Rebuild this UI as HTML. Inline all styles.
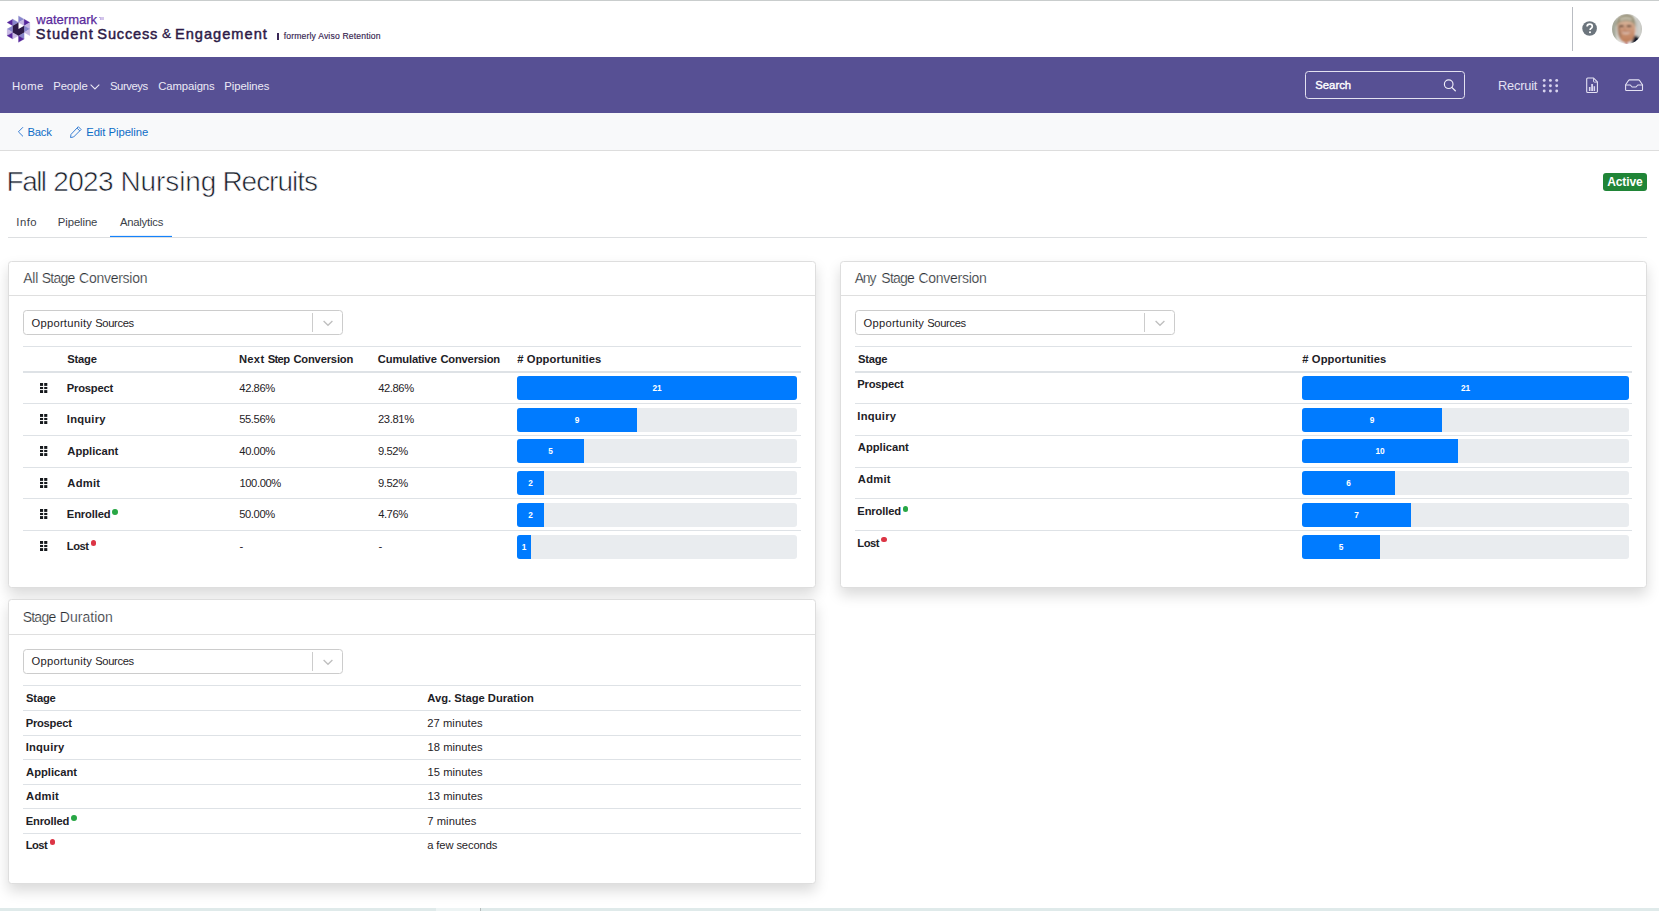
<!DOCTYPE html>
<html><head><meta charset="utf-8"><title>Fall 2023 Nursing Recruits</title>
<style>
html,body{margin:0;padding:0;background:#fff;}
body{width:1659px;height:911px;position:relative;overflow:hidden;font-family:"Liberation Sans",sans-serif;}
div{box-sizing:content-box}
.t{position:absolute;white-space:pre;line-height:20px;font-family:"Liberation Sans",sans-serif;}
</style></head><body>
<div style="position:absolute;left:0px;top:0px;width:1659px;height:1px;background:#c9cdcd"></div>
<svg style="position:absolute;left:0;top:0" width="60" height="57" viewBox="0 0 60 57"><polygon points="7.08,22.5 12.75,19.2 12.75,25.8" fill="#55269b" stroke="#55269b" stroke-width="0.25"/><polygon points="7.08,29.1 12.75,25.8 12.75,32.4" fill="#8886cc" stroke="#8886cc" stroke-width="0.25"/><polygon points="12.75,32.4 7.08,29.1 7.08,35.7" fill="#c6b7e3" stroke="#c6b7e3" stroke-width="0.25"/><polygon points="7.08,35.7 12.75,32.4 12.75,39.0" fill="#55269b" stroke="#55269b" stroke-width="0.25"/><polygon points="18.5,22.5 12.75,19.2 12.75,25.8" fill="#8886cc" stroke="#8886cc" stroke-width="0.25"/><polygon points="18.5,35.7 12.75,32.4 12.75,39.0" fill="#c6b7e3" stroke="#c6b7e3" stroke-width="0.25"/><polygon points="24.15,19.2 18.5,15.9 18.5,22.5" fill="#8886cc" stroke="#8886cc" stroke-width="0.25"/><polygon points="18.5,22.5 24.15,19.2 24.15,25.8" fill="#c6b7e3" stroke="#c6b7e3" stroke-width="0.25"/><polygon points="18.5,35.7 24.15,32.4 24.15,39.0" fill="#8886cc" stroke="#8886cc" stroke-width="0.25"/><polygon points="24.15,39.0 18.5,35.7 18.5,42.3" fill="#55269b" stroke="#55269b" stroke-width="0.25"/><polygon points="29.9,22.5 24.15,19.2 24.15,25.8" fill="#55269b" stroke="#55269b" stroke-width="0.25"/><polygon points="24.15,25.8 29.9,22.5 29.9,29.1" fill="#c6b7e3" stroke="#c6b7e3" stroke-width="0.25"/><polygon points="29.9,29.1 24.15,25.8 24.15,32.4" fill="#8886cc" stroke="#8886cc" stroke-width="0.25"/><polygon points="24.15,32.4 29.9,29.1 29.9,35.7" fill="#c6b7e3" stroke="#c6b7e3" stroke-width="0.25"/><polygon points="12.75,25.8 18.5,22.5 18.5,29.1 24.15,25.8 24.15,32.4 18.5,35.7 12.75,32.4" fill="#2c1a47"/></svg>
<span class="t" style="left:36.32px;top:9.50px;font-size:13px;font-weight:400;color:#5a2a9c;letter-spacing:0.009px;-webkit-text-stroke:0.25px #5a2a9c;">watermark</span>
<div style="position:absolute;left:99.1px;top:17.3px;width:1.9px;height:0.7px;background:#b9a3de"></div>
<div style="position:absolute;left:99.8px;top:17.3px;width:0.6px;height:2.3px;background:#c6b4e4"></div>
<div style="position:absolute;left:101.4px;top:17.4px;width:2.4px;height:2.2px;background:#d3c5eb"></div>
<span class="t" style="left:35.86px;top:24.04px;font-size:14.6px;font-weight:400;color:#2d1a47;letter-spacing:1.120px;-webkit-text-stroke:0.45px #2d1a47;">Student</span><span class="t" style="left:97.36px;top:24.04px;font-size:14.6px;font-weight:400;color:#2d1a47;letter-spacing:0.799px;-webkit-text-stroke:0.45px #2d1a47;">Success</span><span class="t" style="left:174.92px;top:24.04px;font-size:14.6px;font-weight:400;color:#2d1a47;letter-spacing:1.022px;-webkit-text-stroke:0.45px #2d1a47;">Engagement</span>
<span class="t" style="left:162.02px;top:24.39px;font-size:13.6px;font-weight:400;color:#2d1a47;-webkit-text-stroke:0.3px #2d1a47;">&amp;</span>
<div style="position:absolute;left:277.3px;top:32.6px;width:1.3px;height:7.2px;background:#3a2857"></div>
<span class="t" style="left:283.68px;top:25.92px;font-size:8.6px;font-weight:400;color:#35234f;letter-spacing:0.169px;-webkit-text-stroke:0.15px #35234f;">formerly Aviso Retention</span>
<div style="position:absolute;left:1572px;top:7px;width:1px;height:44px;background:#b9bcc2"></div>
<svg style="position:absolute;left:1581px;top:20px" width="17" height="17" viewBox="0 0 17 17"><circle cx="8.6" cy="8.5" r="7.3" fill="#6c757d"/><path d="M6.1 6.6c0-1.5 1.1-2.4 2.6-2.4s2.6.9 2.6 2.2c0 1.1-.7 1.6-1.4 2.1-.6.4-.8.7-.8 1.4" fill="none" stroke="#fff" stroke-width="1.7" stroke-linecap="butt"/><circle cx="9" cy="12.2" r="1.05" fill="#fff"/></svg>
<svg style="position:absolute;left:1612px;top:14px" width="30" height="30" viewBox="0 0 30 30"><defs><clipPath id="av"><circle cx="15" cy="15" r="15"/></clipPath><filter id="bl" x="-20%" y="-20%" width="140%" height="140%"><feGaussianBlur stdDeviation="0.85"/></filter><linearGradient id="fc" x1="0" y1="0" x2="0" y2="1"><stop offset="0" stop-color="#d9b59b"/><stop offset="0.4" stop-color="#cd987a"/><stop offset="1" stop-color="#bd7c56"/></linearGradient></defs><g clip-path="url(#av)"><g filter="url(#bl)"><rect x="-5" y="-5" width="40" height="40" fill="#e4e4e1"/><rect x="-5" y="-5" width="9" height="40" fill="#a5a89a"/><rect x="4" y="-5" width="2.500" height="40" fill="#d4d6cf"/><rect x="24.900" y="-5" width="1.500" height="40" fill="#b0b1ab"/><rect x="28.200" y="-5" width="6" height="40" fill="#bdbdb7"/><path d="M4.300 12.500 Q3.200 1 14.200 -0.200 Q25 0 23.800 14 L21 10 L7 9.500 Z" fill="#989278"/><path d="M7.500 4.500 Q14 1 20.500 4.500 L19.500 6.500 Q14 4.500 8.500 6.800z" fill="#c4bfad"/><path d="M5.200 13.500 Q5.200 7.200 14 7 Q23.400 7.200 23.600 14.500 Q23.900 20.500 21 24.900 Q17.900 28.800 14.300 28.800 Q10.700 28.800 7.900 24.900 Q5.100 20 5.200 13.500z" fill="url(#fc)"/><path d="M5.600 13.500 Q5.600 20 8.100 24.700 L9.500 22.500 Q7.400 17.500 7.700 11z" fill="#a0775b"/><path d="M7.300 12.100 h4.300 M14.800 12.100 h4.500" stroke="#3e281d" stroke-width="1.900"/><path d="M10 18.200 Q14 21.300 17.900 18.200 Q14 19.300 10 18.200z" fill="#ecd9ce" stroke="#e6cfc2" stroke-width="0.7"/><path d="M9.500 17.300 Q14 18.600 18.300 17.300" stroke="#a0624a" stroke-width="0.7" fill="none"/><path d="M12.200 14 Q12 16 13.800 16.300" stroke="#ae7656" stroke-width="0.8" fill="none"/><path d="M8 33 L9.500 27.800 Q14.300 30.500 19.500 27.300 L21 33z" fill="#f1f2f6"/><path d="M18.500 34 L20 27.300 L23 21.200 L27 23.600 L31 27 L31 34z" fill="#101828"/><path d="M13.300 28.900 h2 l.3 2 h-2.600z" fill="#b52c48"/></g></g></svg>
<div style="position:absolute;left:0px;top:57px;width:1659px;height:56px;background:#575094"></div>
<span class="t" style="left:12.07px;top:76.18px;font-size:11.3px;font-weight:400;color:#eceaf6;letter-spacing:0.396px;">Home</span>
<span class="t" style="left:53.27px;top:76.18px;font-size:11.3px;font-weight:400;color:#eceaf6;letter-spacing:-0.132px;">People</span>
<svg style="position:absolute;left:89px;top:82px" width="12" height="10" viewBox="0 0 12 10"><path d="M1.6 2.6 L5.950 6.9 L10.300 2.600" fill="none" stroke="#eceaf6" stroke-width="1.05"/></svg>
<span class="t" style="left:109.99px;top:76.18px;font-size:11.3px;font-weight:400;color:#eceaf6;letter-spacing:-0.449px;">Surveys</span>
<span class="t" style="left:158.23px;top:76.18px;font-size:11.3px;font-weight:400;color:#eceaf6;letter-spacing:-0.084px;">Campaigns</span>
<span class="t" style="left:224.37px;top:76.18px;font-size:11.3px;font-weight:400;color:#eceaf6;letter-spacing:-0.103px;">Pipelines</span>
<div style="position:absolute;left:1305px;top:71px;width:158px;height:26px;border:1px solid #e3e1f0;border-radius:3.500px;"></div>
<span class="t" style="left:1315.29px;top:74.68px;font-size:11.3px;font-weight:400;color:#ffffff;letter-spacing:0.010px;-webkit-text-stroke:0.4px #ffffff;">Search</span>
<svg style="position:absolute;left:1441px;top:77px" width="17" height="16" viewBox="0 0 17 16"><circle cx="7.700" cy="7.200" r="4.300" fill="none" stroke="#f0eef8" stroke-width="1.15"/><path d="M10.800 10.400 L14.300 13.700" stroke="#f0eef8" stroke-width="1.3" stroke-linecap="round"/></svg>
<span class="t" style="left:1498.05px;top:75.96px;font-size:12.8px;font-weight:400;color:#e3e0f2;letter-spacing:-0.201px;">Recruit</span>
<svg style="position:absolute;left:1542px;top:78px" width="18" height="16" viewBox="0 0 18 16"><circle cx="2.2" cy="2.4" r="1.45" fill="#d8d4ee"/><circle cx="2.2" cy="7.7" r="1.45" fill="#d8d4ee"/><circle cx="2.2" cy="13.0" r="1.45" fill="#d8d4ee"/><circle cx="8.4" cy="2.4" r="1.45" fill="#d8d4ee"/><circle cx="8.4" cy="7.7" r="1.45" fill="#d8d4ee"/><circle cx="8.4" cy="13.0" r="1.45" fill="#d8d4ee"/><circle cx="14.7" cy="2.4" r="1.45" fill="#d8d4ee"/><circle cx="14.7" cy="7.7" r="1.45" fill="#d8d4ee"/><circle cx="14.7" cy="13.0" r="1.45" fill="#d8d4ee"/></svg>
<svg style="position:absolute;left:1584px;top:76px" width="17" height="19" viewBox="0 0 17 19"><path d="M3.700 2.050 h5.900 l3.800 3.900 v9.500 a1 1 0 0 1 -1 1 h-8.700 a1 1 0 0 1 -1 -1 v-12.400 a1 1 0 0 1 1 -1z" fill="none" stroke="#e4e1f3" stroke-width="1.1" stroke-linejoin="round"/><path d="M9.500 2.300 v3 a.8 .8 0 0 0 .8 .8 h3" fill="none" stroke="#e4e1f3" stroke-width="0.9"/><rect x="4.900" y="11" width="1.600" height="4" fill="#d9d5ee"/><rect x="7.200" y="8" width="1.800" height="7" fill="#d9d5ee"/><rect x="9.600" y="10.200" width="1.500" height="4.800" fill="#d9d5ee"/></svg>
<svg style="position:absolute;left:1624px;top:77px" width="21" height="17" viewBox="0 0 21 17"><path d="M1.600 7.800 L4.700 3.300 Q5 2.900 5.500 2.900 H14.600 Q15.100 2.900 15.400 3.300 L18.500 7.800 V12.700 Q18.500 13.500 17.700 13.500 H2.400 Q1.600 13.500 1.600 12.700 Z" fill="none" stroke="#e4e1f3" stroke-width="1.1" stroke-linejoin="round"/><path d="M1.600 8 H6.300 L8.100 10 H12 L13.800 8 H18.500" fill="none" stroke="#e4e1f3" stroke-width="1.1" stroke-linejoin="round"/></svg>
<div style="position:absolute;left:0px;top:113px;width:1659px;height:37px;background:#f8f9fa;border-bottom:1px solid #dddddd"></div>
<svg style="position:absolute;left:16px;top:125px" width="9" height="13" viewBox="0 0 9 13"><path d="M7 2.200 L2.400 6.800 L7 11.400" fill="none" stroke="#3a7fd6" stroke-width="1"/></svg>
<span class="t" style="left:27.47px;top:122.18px;font-size:11.3px;font-weight:400;color:#0f6dc6;letter-spacing:-0.238px;">Back</span>
<svg style="position:absolute;left:69px;top:125px" width="14" height="14" viewBox="0 0 14 14"><path d="M9.300 1.700 L12.100 4.500 L4.600 12 L1.500 12.500 L2 9.400 Z M8 3.100 L10.800 5.900" fill="none" stroke="#2f79d2" stroke-width="0.95" stroke-linejoin="round"/></svg>
<span class="t" style="left:86.17px;top:122.18px;font-size:11.3px;font-weight:400;color:#0f6dc6;letter-spacing:-0.057px;">Edit Pipeline</span>
<span class="t" style="left:6.60px;top:171.60px;font-size:28px;font-weight:400;color:#1c222e;letter-spacing:-1.552px;-webkit-text-stroke:0.62px #fff;">Fall</span><span class="t" style="left:53.29px;top:171.60px;font-size:28px;font-weight:400;color:#1c222e;letter-spacing:-0.686px;-webkit-text-stroke:0.62px #fff;">2023</span><span class="t" style="left:120.50px;top:171.60px;font-size:28px;font-weight:400;color:#1c222e;letter-spacing:-0.114px;-webkit-text-stroke:0.62px #fff;">Nursing</span><span class="t" style="left:222.40px;top:171.60px;font-size:28px;font-weight:400;color:#1c222e;letter-spacing:-1.028px;-webkit-text-stroke:0.62px #fff;">Recruits</span>
<div style="position:absolute;left:1603px;top:173px;width:44px;height:18px;background:#208537;border-radius:3px"></div>
<span class="t" style="left:1607.30px;top:171.64px;font-size:12px;font-weight:700;color:#fff;letter-spacing:-0.144px;">Active</span>
<div style="position:absolute;left:8px;top:237px;width:1639px;height:1px;background:#dddfe1"></div>
<div style="position:absolute;left:110px;top:236px;width:62px;height:1px;background:#1583fb"></div>
<div style="position:absolute;left:110px;top:235px;width:62px;height:1px;background:rgba(21,131,251,.12)"></div>
<span class="t" style="left:16.36px;top:212.18px;font-size:11.3px;font-weight:400;color:#3b4148;letter-spacing:0.458px;">Info</span>
<span class="t" style="left:57.87px;top:212.18px;font-size:11.3px;font-weight:400;color:#3b4148;letter-spacing:-0.096px;">Pipeline</span>
<span class="t" style="left:119.88px;top:212.18px;font-size:11.3px;font-weight:400;color:#3b4148;letter-spacing:-0.224px;">Analytics</span>
<div style="position:absolute;left:8px;top:261px;width:806px;height:325px;background:#fff;border:1px solid #dedede;border-radius:3.5px;box-shadow:0 7px 14px rgba(0,0,0,.15);"></div>
<div style="position:absolute;left:9px;top:295px;width:806px;height:1px;background:#dfdfdf"></div>
<span class="t" style="left:23.17px;top:268.15px;font-size:14px;font-weight:400;color:#2b2f34;letter-spacing:-0.199px;-webkit-text-stroke:0.22px #fff;">All</span><span class="t" style="left:41.76px;top:268.15px;font-size:14px;font-weight:400;color:#2b2f34;letter-spacing:-0.759px;-webkit-text-stroke:0.22px #fff;">Stage</span><span class="t" style="left:79.09px;top:268.15px;font-size:14px;font-weight:400;color:#2b2f34;letter-spacing:-0.268px;-webkit-text-stroke:0.22px #fff;">Conversion</span>
<div style="position:absolute;left:23px;top:310px;width:318px;height:23px;border:1px solid #cccccc;border-radius:3.500px;background:#fff"></div>
<div style="position:absolute;left:312px;top:313px;width:1px;height:19px;background:#cccccc"></div>
<svg style="position:absolute;left:321px;top:318px" width="14" height="10" viewBox="0 0 14 10"><path d="M2.600 3.100 L7 7.300 L11.400 3.100" fill="none" stroke="#bfbfbf" stroke-width="1.35"/></svg>
<span class="t" style="left:31.47px;top:312.92px;font-size:11.2px;font-weight:400;color:#1f2226;letter-spacing:0.261px;">Opportunity</span><span class="t" style="left:95.19px;top:312.92px;font-size:11.2px;font-weight:400;color:#1f2226;letter-spacing:-0.339px;">Sources</span>
<div style="position:absolute;left:23px;top:346px;width:778px;height:1px;background:#dee2e6"></div>
<span class="t" style="left:67.18px;top:349.32px;font-size:11.2px;font-weight:700;color:#1d2126;letter-spacing:-0.191px;">Stage</span>
<span class="t" style="left:238.95px;top:349.32px;font-size:11.2px;font-weight:700;color:#1d2126;letter-spacing:0.312px;">Next</span><span class="t" style="left:267.68px;top:349.32px;font-size:11.2px;font-weight:700;color:#1d2126;letter-spacing:-0.623px;">Step</span><span class="t" style="left:293.44px;top:349.32px;font-size:11.2px;font-weight:700;color:#1d2126;letter-spacing:-0.188px;">Conversion</span>
<span class="t" style="left:377.84px;top:349.32px;font-size:11.2px;font-weight:700;color:#1d2126;letter-spacing:-0.141px;">Cumulative</span><span class="t" style="left:440.44px;top:349.32px;font-size:11.2px;font-weight:700;color:#1d2126;letter-spacing:-0.199px;">Conversion</span>
<span class="t" style="left:517.31px;top:349.32px;font-size:11.2px;font-weight:700;color:#1d2126;">#</span><span class="t" style="left:526.84px;top:349.32px;font-size:11.2px;font-weight:700;color:#1d2126;letter-spacing:0.098px;">Opportunities</span>
<div style="position:absolute;left:23px;top:371px;width:778px;height:2px;background:#dee2e6"></div>
<svg style="position:absolute;left:39.800px;top:382.9px" width="8" height="11" viewBox="0 0 8 11"><rect x="0" y="0" width="3.1" height="2.9" fill="#15181c"/><rect x="0" y="3.95" width="3.1" height="2.1" fill="#15181c"/><rect x="0" y="7.1" width="3.1" height="2.9" fill="#15181c"/><rect x="4.2" y="0" width="3.1" height="2.9" fill="#15181c"/><rect x="4.2" y="3.95" width="3.1" height="2.1" fill="#15181c"/><rect x="4.2" y="7.1" width="3.1" height="2.9" fill="#15181c"/></svg>
<span class="t" style="left:66.85px;top:377.92px;font-size:11.2px;font-weight:700;color:#1d2126;letter-spacing:-0.227px;">Prospect</span>
<span class="t" style="left:239.34px;top:377.92px;font-size:11.2px;font-weight:400;color:#1f2327;letter-spacing:-0.419px;">42.86%</span>
<span class="t" style="left:378.24px;top:377.92px;font-size:11.2px;font-weight:400;color:#1f2327;letter-spacing:-0.419px;">42.86%</span>
<div style="position:absolute;left:517px;top:376px;width:280px;height:24px;background:#e9ecef;border-radius:3px;overflow:hidden"></div>
<div style="position:absolute;left:517px;top:376px;width:280px;height:24px;background:#007bff;border-radius:3px"></div>
<span class="t" style="left:652.38px;top:378.12px;font-size:8.3px;font-weight:700;color:#fff;">21</span>
<div style="position:absolute;left:23px;top:403px;width:778px;height:1px;background:#dee2e6"></div>
<svg style="position:absolute;left:39.800px;top:413.9px" width="8" height="11" viewBox="0 0 8 11"><rect x="0" y="0" width="3.1" height="2.9" fill="#15181c"/><rect x="0" y="3.95" width="3.1" height="2.1" fill="#15181c"/><rect x="0" y="7.1" width="3.1" height="2.9" fill="#15181c"/><rect x="4.2" y="0" width="3.1" height="2.9" fill="#15181c"/><rect x="4.2" y="3.95" width="3.1" height="2.1" fill="#15181c"/><rect x="4.2" y="7.1" width="3.1" height="2.9" fill="#15181c"/></svg>
<span class="t" style="left:66.85px;top:408.92px;font-size:11.2px;font-weight:700;color:#1d2126;letter-spacing:0.219px;">Inquiry</span>
<span class="t" style="left:239.15px;top:408.92px;font-size:11.2px;font-weight:400;color:#1f2327;letter-spacing:-0.381px;">55.56%</span>
<span class="t" style="left:377.94px;top:408.92px;font-size:11.2px;font-weight:400;color:#1f2327;letter-spacing:-0.358px;">23.81%</span>
<div style="position:absolute;left:517px;top:408px;width:280px;height:24px;background:#e9ecef;border-radius:3px;overflow:hidden"></div>
<div style="position:absolute;left:517px;top:408px;width:120px;height:24px;background:#007bff;border-radius:3px 0 0 3px"></div>
<span class="t" style="left:574.69px;top:410.12px;font-size:8.3px;font-weight:700;color:#fff;">9</span>
<div style="position:absolute;left:23px;top:435px;width:778px;height:1px;background:#dee2e6"></div>
<svg style="position:absolute;left:39.800px;top:445.9px" width="8" height="11" viewBox="0 0 8 11"><rect x="0" y="0" width="3.1" height="2.9" fill="#15181c"/><rect x="0" y="3.95" width="3.1" height="2.1" fill="#15181c"/><rect x="0" y="7.1" width="3.1" height="2.9" fill="#15181c"/><rect x="4.2" y="0" width="3.1" height="2.9" fill="#15181c"/><rect x="4.2" y="3.95" width="3.1" height="2.1" fill="#15181c"/><rect x="4.2" y="7.1" width="3.1" height="2.9" fill="#15181c"/></svg>
<span class="t" style="left:67.32px;top:440.92px;font-size:11.2px;font-weight:700;color:#1d2126;letter-spacing:-0.007px;">Applicant</span>
<span class="t" style="left:239.34px;top:440.92px;font-size:11.2px;font-weight:400;color:#1f2327;letter-spacing:-0.419px;">40.00%</span>
<span class="t" style="left:377.98px;top:440.92px;font-size:11.2px;font-weight:400;color:#1f2327;letter-spacing:-0.403px;">9.52%</span>
<div style="position:absolute;left:517px;top:439px;width:280px;height:24px;background:#e9ecef;border-radius:3px;overflow:hidden"></div>
<div style="position:absolute;left:517px;top:439px;width:67px;height:24px;background:#007bff;border-radius:3px 0 0 3px"></div>
<span class="t" style="left:548.19px;top:441.12px;font-size:8.3px;font-weight:700;color:#fff;">5</span>
<div style="position:absolute;left:23px;top:467px;width:778px;height:1px;background:#dee2e6"></div>
<svg style="position:absolute;left:39.800px;top:477.9px" width="8" height="11" viewBox="0 0 8 11"><rect x="0" y="0" width="3.1" height="2.9" fill="#15181c"/><rect x="0" y="3.95" width="3.1" height="2.1" fill="#15181c"/><rect x="0" y="7.1" width="3.1" height="2.9" fill="#15181c"/><rect x="4.2" y="0" width="3.1" height="2.9" fill="#15181c"/><rect x="4.2" y="3.95" width="3.1" height="2.1" fill="#15181c"/><rect x="4.2" y="7.1" width="3.1" height="2.9" fill="#15181c"/></svg>
<span class="t" style="left:67.32px;top:472.92px;font-size:11.2px;font-weight:700;color:#1d2126;letter-spacing:0.253px;">Admit</span>
<span class="t" style="left:239.45px;top:472.92px;font-size:11.2px;font-weight:400;color:#1f2327;letter-spacing:-0.387px;">100.00%</span>
<span class="t" style="left:377.98px;top:472.92px;font-size:11.2px;font-weight:400;color:#1f2327;letter-spacing:-0.403px;">9.52%</span>
<div style="position:absolute;left:517px;top:471px;width:280px;height:24px;background:#e9ecef;border-radius:3px;overflow:hidden"></div>
<div style="position:absolute;left:517px;top:471px;width:27px;height:24px;background:#007bff;border-radius:3px 0 0 3px"></div>
<span class="t" style="left:528.19px;top:473.12px;font-size:8.3px;font-weight:700;color:#fff;">2</span>
<div style="position:absolute;left:23px;top:498px;width:778px;height:1px;background:#dee2e6"></div>
<svg style="position:absolute;left:39.800px;top:508.9px" width="8" height="11" viewBox="0 0 8 11"><rect x="0" y="0" width="3.1" height="2.9" fill="#15181c"/><rect x="0" y="3.95" width="3.1" height="2.1" fill="#15181c"/><rect x="0" y="7.1" width="3.1" height="2.9" fill="#15181c"/><rect x="4.2" y="0" width="3.1" height="2.9" fill="#15181c"/><rect x="4.2" y="3.95" width="3.1" height="2.1" fill="#15181c"/><rect x="4.2" y="7.1" width="3.1" height="2.9" fill="#15181c"/></svg>
<span class="t" style="left:66.85px;top:503.92px;font-size:11.2px;font-weight:700;color:#1d2126;letter-spacing:-0.140px;">Enrolled</span>
<div style="position:absolute;left:112.2px;top:508.9px;width:5.8px;height:5.8px;border-radius:50%;background:#28a745"></div>
<span class="t" style="left:239.15px;top:503.92px;font-size:11.2px;font-weight:400;color:#1f2327;letter-spacing:-0.381px;">50.00%</span>
<span class="t" style="left:378.24px;top:503.92px;font-size:11.2px;font-weight:400;color:#1f2327;letter-spacing:-0.470px;">4.76%</span>
<div style="position:absolute;left:517px;top:503px;width:280px;height:24px;background:#e9ecef;border-radius:3px;overflow:hidden"></div>
<div style="position:absolute;left:517px;top:503px;width:27px;height:24px;background:#007bff;border-radius:3px 0 0 3px"></div>
<span class="t" style="left:528.19px;top:505.12px;font-size:8.3px;font-weight:700;color:#fff;">2</span>
<div style="position:absolute;left:23px;top:530px;width:778px;height:1px;background:#dee2e6"></div>
<svg style="position:absolute;left:39.800px;top:540.9px" width="8" height="11" viewBox="0 0 8 11"><rect x="0" y="0" width="3.1" height="2.9" fill="#15181c"/><rect x="0" y="3.95" width="3.1" height="2.1" fill="#15181c"/><rect x="0" y="7.1" width="3.1" height="2.9" fill="#15181c"/><rect x="4.2" y="0" width="3.1" height="2.9" fill="#15181c"/><rect x="4.2" y="3.95" width="3.1" height="2.1" fill="#15181c"/><rect x="4.2" y="7.1" width="3.1" height="2.9" fill="#15181c"/></svg>
<span class="t" style="left:66.85px;top:535.92px;font-size:11.2px;font-weight:700;color:#1d2126;letter-spacing:-0.480px;">Lost</span>
<div style="position:absolute;left:90.7px;top:540.0px;width:5.8px;height:5.8px;border-radius:50%;background:#dc3545"></div>
<span class="t" style="left:239.60px;top:535.92px;font-size:11.2px;font-weight:400;color:#1f2327;">-</span>
<span class="t" style="left:378.50px;top:535.92px;font-size:11.2px;font-weight:400;color:#1f2327;">-</span>
<div style="position:absolute;left:517px;top:535px;width:280px;height:24px;background:#e9ecef;border-radius:3px;overflow:hidden"></div>
<div style="position:absolute;left:517px;top:535px;width:14px;height:24px;background:#007bff;border-radius:3px 0 0 3px"></div>
<span class="t" style="left:521.69px;top:537.12px;font-size:8.3px;font-weight:700;color:#fff;">1</span>
<div style="position:absolute;left:840px;top:261px;width:805px;height:325px;background:#fff;border:1px solid #dedede;border-radius:3.5px;box-shadow:0 7px 14px rgba(0,0,0,.15);"></div>
<div style="position:absolute;left:841px;top:295px;width:805px;height:1px;background:#dfdfdf"></div>
<span class="t" style="left:854.77px;top:268.15px;font-size:14px;font-weight:400;color:#2b2f34;letter-spacing:-1.235px;-webkit-text-stroke:0.22px #fff;">Any</span><span class="t" style="left:881.36px;top:268.15px;font-size:14px;font-weight:400;color:#2b2f34;letter-spacing:-0.759px;-webkit-text-stroke:0.22px #fff;">Stage</span><span class="t" style="left:918.49px;top:268.15px;font-size:14px;font-weight:400;color:#2b2f34;letter-spacing:-0.279px;-webkit-text-stroke:0.22px #fff;">Conversion</span>
<div style="position:absolute;left:855px;top:310px;width:318px;height:23px;border:1px solid #cccccc;border-radius:3.500px;background:#fff"></div>
<div style="position:absolute;left:1144px;top:313px;width:1px;height:19px;background:#cccccc"></div>
<svg style="position:absolute;left:1153px;top:318px" width="14" height="10" viewBox="0 0 14 10"><path d="M2.600 3.100 L7 7.300 L11.400 3.100" fill="none" stroke="#bfbfbf" stroke-width="1.35"/></svg>
<span class="t" style="left:863.47px;top:312.92px;font-size:11.2px;font-weight:400;color:#1f2226;letter-spacing:0.261px;">Opportunity</span><span class="t" style="left:927.19px;top:312.92px;font-size:11.2px;font-weight:400;color:#1f2226;letter-spacing:-0.339px;">Sources</span>
<div style="position:absolute;left:855px;top:346px;width:777px;height:1px;background:#dee2e6"></div>
<span class="t" style="left:857.88px;top:349.32px;font-size:11.2px;font-weight:700;color:#1d2126;letter-spacing:-0.191px;">Stage</span>
<span class="t" style="left:1302.31px;top:349.32px;font-size:11.2px;font-weight:700;color:#1d2126;">#</span><span class="t" style="left:1311.84px;top:349.32px;font-size:11.2px;font-weight:700;color:#1d2126;letter-spacing:0.098px;">Opportunities</span>
<div style="position:absolute;left:855px;top:371px;width:777px;height:2px;background:#dee2e6"></div>
<span class="t" style="left:857.35px;top:373.92px;font-size:11.2px;font-weight:700;color:#1d2126;letter-spacing:-0.227px;">Prospect</span>
<div style="position:absolute;left:1302px;top:376px;width:327px;height:24px;background:#e9ecef;border-radius:3px;overflow:hidden"></div>
<div style="position:absolute;left:1302px;top:376px;width:327px;height:24px;background:#007bff;border-radius:3px"></div>
<span class="t" style="left:1460.88px;top:378.12px;font-size:8.3px;font-weight:700;color:#fff;">21</span>
<div style="position:absolute;left:855px;top:403px;width:777px;height:1px;background:#dee2e6"></div>
<span class="t" style="left:857.35px;top:405.72px;font-size:11.2px;font-weight:700;color:#1d2126;letter-spacing:0.219px;">Inquiry</span>
<div style="position:absolute;left:1302px;top:408px;width:327px;height:24px;background:#e9ecef;border-radius:3px;overflow:hidden"></div>
<div style="position:absolute;left:1302px;top:408px;width:140px;height:24px;background:#007bff;border-radius:3px 0 0 3px"></div>
<span class="t" style="left:1369.69px;top:410.12px;font-size:8.3px;font-weight:700;color:#fff;">9</span>
<div style="position:absolute;left:855px;top:435px;width:777px;height:1px;background:#dee2e6"></div>
<span class="t" style="left:857.82px;top:436.92px;font-size:11.2px;font-weight:700;color:#1d2126;letter-spacing:-0.007px;">Applicant</span>
<div style="position:absolute;left:1302px;top:439px;width:327px;height:24px;background:#e9ecef;border-radius:3px;overflow:hidden"></div>
<div style="position:absolute;left:1302px;top:439px;width:156px;height:24px;background:#007bff;border-radius:3px 0 0 3px"></div>
<span class="t" style="left:1375.38px;top:441.12px;font-size:8.3px;font-weight:700;color:#fff;">10</span>
<div style="position:absolute;left:855px;top:467px;width:777px;height:1px;background:#dee2e6"></div>
<span class="t" style="left:857.82px;top:468.92px;font-size:11.2px;font-weight:700;color:#1d2126;letter-spacing:0.253px;">Admit</span>
<div style="position:absolute;left:1302px;top:471px;width:327px;height:24px;background:#e9ecef;border-radius:3px;overflow:hidden"></div>
<div style="position:absolute;left:1302px;top:471px;width:93px;height:24px;background:#007bff;border-radius:3px 0 0 3px"></div>
<span class="t" style="left:1346.19px;top:473.12px;font-size:8.3px;font-weight:700;color:#fff;">6</span>
<div style="position:absolute;left:855px;top:498px;width:777px;height:1px;background:#dee2e6"></div>
<span class="t" style="left:857.35px;top:500.82px;font-size:11.2px;font-weight:700;color:#1d2126;letter-spacing:-0.140px;">Enrolled</span>
<div style="position:absolute;left:902.7px;top:505.8px;width:5.8px;height:5.8px;border-radius:50%;background:#28a745"></div>
<div style="position:absolute;left:1302px;top:503px;width:327px;height:24px;background:#e9ecef;border-radius:3px;overflow:hidden"></div>
<div style="position:absolute;left:1302px;top:503px;width:109px;height:24px;background:#007bff;border-radius:3px 0 0 3px"></div>
<span class="t" style="left:1354.19px;top:505.12px;font-size:8.3px;font-weight:700;color:#fff;">7</span>
<div style="position:absolute;left:855px;top:530px;width:777px;height:1px;background:#dee2e6"></div>
<span class="t" style="left:857.35px;top:532.62px;font-size:11.2px;font-weight:700;color:#1d2126;letter-spacing:-0.480px;">Lost</span>
<div style="position:absolute;left:881.2px;top:536.7px;width:5.8px;height:5.8px;border-radius:50%;background:#dc3545"></div>
<div style="position:absolute;left:1302px;top:535px;width:327px;height:24px;background:#e9ecef;border-radius:3px;overflow:hidden"></div>
<div style="position:absolute;left:1302px;top:535px;width:78px;height:24px;background:#007bff;border-radius:3px 0 0 3px"></div>
<span class="t" style="left:1338.69px;top:537.12px;font-size:8.3px;font-weight:700;color:#fff;">5</span>
<div style="position:absolute;left:8px;top:599px;width:806px;height:283px;background:#fff;border:1px solid #dedede;border-radius:3.5px;box-shadow:0 7px 14px rgba(0,0,0,.15);"></div>
<div style="position:absolute;left:9px;top:634px;width:806px;height:1px;background:#dfdfdf"></div>
<span class="t" style="left:22.66px;top:607.15px;font-size:14px;font-weight:400;color:#2b2f34;letter-spacing:-0.759px;-webkit-text-stroke:0.22px #fff;">Stage</span><span class="t" style="left:59.75px;top:607.15px;font-size:14px;font-weight:400;color:#2b2f34;letter-spacing:0.034px;-webkit-text-stroke:0.22px #fff;">Duration</span>
<div style="position:absolute;left:23px;top:649px;width:318px;height:23px;border:1px solid #cccccc;border-radius:3.500px;background:#fff"></div>
<div style="position:absolute;left:312px;top:652px;width:1px;height:19px;background:#cccccc"></div>
<svg style="position:absolute;left:321px;top:657px" width="14" height="10" viewBox="0 0 14 10"><path d="M2.600 3.100 L7 7.300 L11.400 3.100" fill="none" stroke="#bfbfbf" stroke-width="1.35"/></svg>
<span class="t" style="left:31.47px;top:651.22px;font-size:11.2px;font-weight:400;color:#1f2226;letter-spacing:0.261px;">Opportunity</span><span class="t" style="left:95.19px;top:651.22px;font-size:11.2px;font-weight:400;color:#1f2226;letter-spacing:-0.339px;">Sources</span>
<div style="position:absolute;left:23px;top:685px;width:778px;height:1px;background:#dee2e6"></div>
<span class="t" style="left:26.08px;top:688.12px;font-size:11.2px;font-weight:700;color:#1d2126;letter-spacing:-0.191px;">Stage</span>
<span class="t" style="left:427.32px;top:688.12px;font-size:11.2px;font-weight:700;color:#1d2126;letter-spacing:-0.001px;">Avg. Stage Duration</span>
<div style="position:absolute;left:23px;top:710px;width:778px;height:1px;background:#dee2e6"></div>
<span class="t" style="left:25.65px;top:712.92px;font-size:11.2px;font-weight:700;color:#1d2126;letter-spacing:-0.227px;">Prospect</span>
<span class="t" style="left:427.14px;top:712.92px;font-size:11.2px;font-weight:400;color:#1f2327;letter-spacing:0.082px;">27 minutes</span>
<div style="position:absolute;left:23px;top:735px;width:778px;height:1px;background:#dee2e6"></div>
<span class="t" style="left:25.65px;top:737.12px;font-size:11.2px;font-weight:700;color:#1d2126;letter-spacing:0.219px;">Inquiry</span>
<span class="t" style="left:427.45px;top:737.12px;font-size:11.2px;font-weight:400;color:#1f2327;letter-spacing:0.047px;">18 minutes</span>
<div style="position:absolute;left:23px;top:759px;width:778px;height:1px;background:#dee2e6"></div>
<span class="t" style="left:26.12px;top:761.52px;font-size:11.2px;font-weight:700;color:#1d2126;letter-spacing:-0.007px;">Applicant</span>
<span class="t" style="left:427.45px;top:761.52px;font-size:11.2px;font-weight:400;color:#1f2327;letter-spacing:0.047px;">15 minutes</span>
<div style="position:absolute;left:23px;top:784px;width:778px;height:1px;background:#dee2e6"></div>
<span class="t" style="left:26.12px;top:785.82px;font-size:11.2px;font-weight:700;color:#1d2126;letter-spacing:0.253px;">Admit</span>
<span class="t" style="left:427.45px;top:785.82px;font-size:11.2px;font-weight:400;color:#1f2327;letter-spacing:0.047px;">13 minutes</span>
<div style="position:absolute;left:23px;top:808px;width:778px;height:1px;background:#dee2e6"></div>
<span class="t" style="left:25.65px;top:811.12px;font-size:11.2px;font-weight:700;color:#1d2126;letter-spacing:-0.140px;">Enrolled</span>
<div style="position:absolute;left:71.0px;top:815.3px;width:5.8px;height:5.8px;border-radius:50%;background:#28a745"></div>
<span class="t" style="left:427.13px;top:811.12px;font-size:11.2px;font-weight:400;color:#1f2327;letter-spacing:0.095px;">7 minutes</span>
<div style="position:absolute;left:23px;top:833px;width:778px;height:1px;background:#dee2e6"></div>
<span class="t" style="left:25.65px;top:834.92px;font-size:11.2px;font-weight:700;color:#1d2126;letter-spacing:-0.480px;">Lost</span>
<div style="position:absolute;left:49.5px;top:839.0px;width:5.8px;height:5.8px;border-radius:50%;background:#dc3545"></div>
<span class="t" style="left:427.22px;top:834.92px;font-size:11.2px;font-weight:400;color:#1f2327;letter-spacing:-0.113px;">a few seconds</span>
<div style="position:absolute;left:0px;top:908px;width:1659px;height:3px;background:#dfeaea"></div>
<div style="position:absolute;left:436px;top:908px;width:44px;height:3px;background:#edf4f4"></div>
<div style="position:absolute;left:480px;top:908px;width:1px;height:3px;background:#b5bcbc"></div>
</body></html>
